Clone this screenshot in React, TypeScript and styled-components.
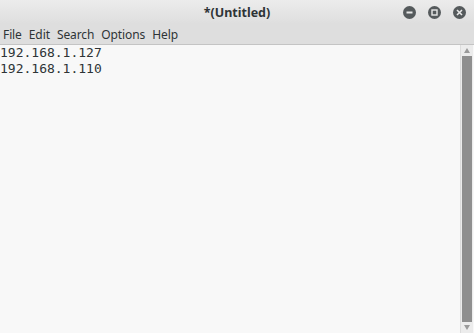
import React from "react";
import styled, { createGlobalStyle } from "styled-components";

const Global = createGlobalStyle`
  html, body { margin: 0; padding: 0; width: 474px; height: 333px; overflow: hidden; background: #f8f8f8; }
  #root { width: 474px; height: 333px; }
`;

const Window = styled.div`
  width: 474px;
  height: 333px;
  display: flex;
  flex-direction: column;
  background: #f8f8f8;
`;

const TitleBar = styled.div`
  height: 24px;
  display: grid;
  grid-template-columns: 1fr auto 1fr;
  align-items: center;
  background: linear-gradient(#ececec, #dedede);
`;

const Title = styled.div`
  grid-column: 2;
  font-family: "Noto Sans", "Open Sans", sans-serif;
  font-weight: bold;
  font-size: 12.5px;
  color: #2e3436;
`;

const Controls = styled.div`
  grid-column: 3;
  justify-self: end;
  display: flex;
  gap: 12px;
  padding-right: 8px;
`;

const CtrlButton = styled.div`
  width: 13px;
  height: 13px;
  border-radius: 50%;
  background: #555a5c;
  display: flex;
  align-items: center;
  justify-content: center;
`;

const MenuBar = styled.div`
  height: 20px;
  display: flex;
  align-items: center;
  background: #dedede;
  border-bottom: 1px solid #c4c4c4;
`;

const MenuItem = styled.span`
  font-family: "Noto Sans", "Open Sans", sans-serif;
  font-size: 12px;
  letter-spacing: -0.1px;
  color: #2e3436;
  padding: 0 3px;
  margin-right: 1px;
`;

const Body = styled.div`
  flex: 1;
  display: flex;
  min-height: 0;
`;

const Editor = styled.div`
  flex: 1;
  background: #f8f8f8;
  padding-top: 0;
  font-family: "DejaVu Sans Mono", monospace;
  font-size: 13px;
  line-height: 16px;
  color: #2e3436;
  white-space: pre;
`;

const Scrollbar = styled.div`
  width: 12px;
  margin-right: 1px;
  display: flex;
  flex-direction: column;
  align-items: center;
  background: #ececec;
  border-left: 1px solid #dcdcdc;
`;

const Arrow = styled.div<{ $down?: boolean }>`
  height: 11px;
  display: flex;
  align-items: center;
  justify-content: center;
  &::before {
    content: "";
    border-left: 3px solid transparent;
    border-right: 3px solid transparent;
    ${(p) => (p.$down ? "border-top: 5px solid #9a9a9a;" : "border-bottom: 5px solid #9a9a9a;")}
  }
`;

const Thumb = styled.div`
  flex: 1;
  width: 10px;
  background: #8f8f8f;
`;

export default function App() {
  return (
    <>
      <Global />
      <Window>
        <TitleBar>
          <Title>*(Untitled)</Title>
          <Controls>
            <CtrlButton>
              <svg width="7" height="7" viewBox="0 0 7 7">
                <rect x="0.5" y="2.5" width="6" height="2" fill="#e8e8e8" />
              </svg>
            </CtrlButton>
            <CtrlButton>
              <svg width="7" height="7" viewBox="0 0 7 7">
                <rect x="1" y="1" width="5" height="5" fill="none" stroke="#e8e8e8" strokeWidth="1.4" />
              </svg>
            </CtrlButton>
            <CtrlButton>
              <svg width="7" height="7" viewBox="0 0 7 7">
                <path d="M1 1 L6 6 M6 1 L1 6" stroke="#e8e8e8" strokeWidth="1.6" />
              </svg>
            </CtrlButton>
          </Controls>
        </TitleBar>
        <MenuBar>
          <MenuItem>File</MenuItem>
          <MenuItem>Edit</MenuItem>
          <MenuItem>Search</MenuItem>
          <MenuItem>Options</MenuItem>
          <MenuItem>Help</MenuItem>
        </MenuBar>
        <Body>
          <Editor>{"192.168.1.127\n192.168.1.110"}</Editor>
          <Scrollbar>
            <Arrow />
            <Thumb />
            <Arrow $down />
          </Scrollbar>
        </Body>
      </Window>
    </>
  );
}
